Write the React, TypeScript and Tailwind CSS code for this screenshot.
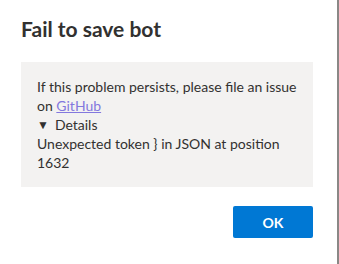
export default function App() {
  return (
    <div
      className="flex h-[264px] w-[339px] flex-col border-r-2 border-[#8a8886] bg-white text-[#323130]"
      style={{ fontFamily: '"Segoe UI", Lato, "Noto Sans", sans-serif' }}
    >
      <div className="px-[21px] pt-[15px]">
        <h1 className="text-[21px] font-bold leading-[28px]">Fail to save bot</h1>
      </div>

      <div className="mx-[21px] mt-[19px] w-[292px] whitespace-nowrap bg-[#f3f2f1] px-4 py-[15px] text-[14px] leading-[19px]">
        <div>If this problem persists, please file an issue</div>
        <div>
          on{' '}
          <a href="#" className="text-[#8378de] underline">
            GitHub
          </a>
        </div>
        <div className="flex items-center gap-[6px]">
          <span className="text-[12px]">▼</span>
          <span>Details</span>
        </div>
        <div>Unexpected token {'}'} in JSON at position</div>
        <div>1632</div>
      </div>

      <div className="mt-[19px] flex justify-end pr-[24px]">
        <button className="h-[32px] w-[80px] rounded-[2px] bg-[#0078d4] text-[14px] font-bold text-white">
          OK
        </button>
      </div>
    </div>
  );
}
